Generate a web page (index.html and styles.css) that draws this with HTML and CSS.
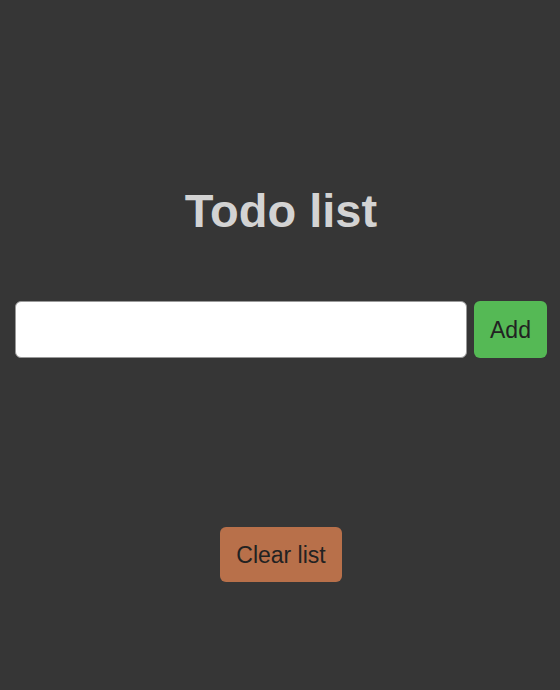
FILE: index.html
```html
<!DOCTYPE html>
<html lang="en">
<head>
<meta charset="utf-8">
<title>Todo list</title>
<link rel="stylesheet" href="styles.css">
</head>
<body>
<main class="app">
  <h1 class="title">Todo list</h1>
  <form class="add-form">
    <input class="todo-input" type="text">
    <button class="btn btn-add" type="button">Add</button>
  </form>
  <ul class="todo-list"></ul>
  <div class="footer">
    <button class="btn btn-clear" type="button">Clear list</button>
  </div>
</main>
</body>
</html>
```
FILE: styles.css
```css
html, body {
  margin: 0;
  padding: 0;
  background: #363636;
  font-family: "Liberation Sans", Arial, sans-serif;
}
.app {
  padding: 184px 13px 0 15px;
}
.title {
  margin: 0;
  text-align: center;
  color: #d3d3d3;
  font-size: 47px;
  font-weight: bold;
  line-height: 54px;
}
.add-form {
  display: flex;
  gap: 7px;
  margin: 63px 0 0 0;
}
.todo-input {
  flex: 1;
  height: 57px;
  box-sizing: border-box;
  border: 1px solid #999;
  border-radius: 6px;
  background: #fff;
  font-size: 23px;
  padding: 0 10px;
  margin: 0;
}
.btn {
  font-family: "Liberation Sans", Arial, sans-serif;
  font-size: 23px;
  line-height: 26px;
  color: #222;
  border: none;
  border-radius: 6px;
  padding: 0;
  height: 57px;
  margin: 0;
}
.btn-add {
  background: #55b955;
  width: 73px;
}
.todo-list {
  list-style: none;
  margin: 0;
  padding: 0;
  height: 169px;
}
.footer {
  display: flex;
  justify-content: center;
}
.btn-clear {
  background: #b8704a;
  width: 122px;
  height: 55px;
}
```
